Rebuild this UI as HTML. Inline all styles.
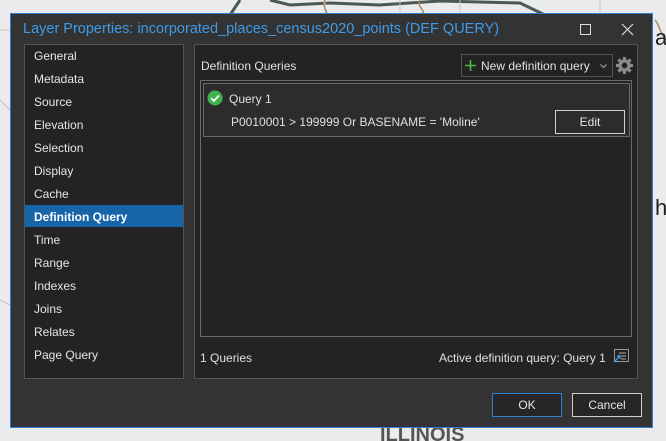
<!DOCTYPE html>
<html><head><style>
*{margin:0;padding:0;box-sizing:border-box}
body{width:666px;height:441px;overflow:hidden;background:#e9ebed;font-family:"Liberation Sans",sans-serif;position:relative}
.a{position:absolute}
.dlg{left:10px;top:13px;width:643px;height:415px;background:#333333;border:1px solid #2f7fd0}
.t{color:#3f9be8;font-size:14.5px;left:23px;top:21px;white-space:nowrap}
.lp{left:24px;top:44px;width:160px;height:335px;background:#232323;border:1px solid #555}
.it{left:34px;color:#e6e6e6;font-size:12px}
.rp{left:194px;top:44px;width:444px;height:335px;background:#232323;border:1px solid #555}
.txt{color:#e0e0e0;font-size:12px;white-space:nowrap}
.btn{border:1px solid #8a8a8a;color:#e6e6e6;font-size:12px;text-align:center}
</style></head><body>
<svg class="a" style="left:0;top:0" width="666" height="441">
<path d="M240 0 L230 15 M270 0 L290 5 L330 3 L380 5 L440 1 L520 3 L545 15" stroke="#4a5a50" stroke-width="3" fill="none"/>
<path d="M325 0 V13 M400 0 V13 M460 0 V13 M600 0 V13 M0 30 H10" stroke="#c8c8c8" fill="none"/>
<path d="M325 0 C322 5 326 10 327 13 M420 0 C416 6 425 10 423 13 M655 20 C660 25 658 30 666 40" stroke="#b08a60" stroke-width="1.5" fill="none"/>
<path d="M0 100 L10 110 M0 300 L10 305" stroke="#c0c0c0" fill="none"/>
<text x="655" y="45" font-size="22" font-family="Liberation Sans" fill="#222">a</text>
<text x="655" y="215" font-size="22" font-family="Liberation Sans" fill="#222">h</text>
<text x="380" y="441" font-size="20" font-family="Liberation Sans" font-weight="bold" fill="#555">ILLINOIS</text>
</svg>
<div class="a dlg"></div>
<div class="a t">Layer Properties: incorporated_places_census2020_points (DEF QUERY)</div>
<div class="a" style="left:580px;top:24px;width:11px;height:11px;border:1px solid #ddd"></div>
<svg class="a" style="left:621px;top:23px" width="13" height="13"><path d="M1 1L12 12M12 1L1 12" stroke="#ddd" stroke-width="1.2"/></svg>
<div class="a lp"></div>
<div class="a" style="left:25px;top:205px;width:158px;height:22px;background:#1565a8"></div>
<div class="a it" style="top:49px">General</div>
<div class="a it" style="top:72px">Metadata</div>
<div class="a it" style="top:95px">Source</div>
<div class="a it" style="top:118px">Elevation</div>
<div class="a it" style="top:141px">Selection</div>
<div class="a it" style="top:164px">Display</div>
<div class="a it" style="top:187px">Cache</div>
<div class="a it" style="top:210px;font-weight:bold;color:#fff">Definition Query</div>
<div class="a it" style="top:233px">Time</div>
<div class="a it" style="top:256px">Range</div>
<div class="a it" style="top:279px">Indexes</div>
<div class="a it" style="top:302px">Joins</div>
<div class="a it" style="top:325px">Relates</div>
<div class="a it" style="top:348px">Page Query</div>
<div class="a rp"></div>
<div class="a txt" style="left:201px;top:59px">Definition Queries</div>
<div class="a" style="left:461px;top:54px;width:152px;height:23px;border:1px solid #555"></div>
<svg class="a" style="left:465px;top:60px" width="11" height="11"><path d="M5.5 0V11M0 5.5H11" stroke="#4cbb4c" stroke-width="1.6"/></svg>
<div class="a txt" style="left:481px;top:59px">New definition query</div>
<svg class="a" style="left:600px;top:64px" width="7" height="5"><path d="M0.5 0.5L3.5 3.5L6.5 0.5" stroke="#aaa" fill="none"/></svg>
<svg class="a" style="left:615px;top:56px" width="19" height="19" viewBox="0 0 20 20"><g fill="#8a8a8a"><circle cx="10" cy="10" r="6.5"/><rect x="8.3" y="1" width="3.4" height="18"/><rect x="1" y="8.3" width="18" height="3.4"/><rect x="8.3" y="1" width="3.4" height="18" transform="rotate(45 10 10)"/><rect x="8.3" y="1" width="3.4" height="18" transform="rotate(-45 10 10)"/></g><circle cx="10" cy="10" r="3" fill="#232323"/></svg>
<div class="a" style="left:200px;top:80px;width:432px;height:257px;border:1px solid #6a6a6a"></div>
<div class="a" style="left:203px;top:83px;width:427px;height:54px;background:#2c2c2c;border:1px solid #6a6a6a"></div>
<svg class="a" style="left:207px;top:90px" width="16" height="16"><circle cx="8" cy="8" r="7.5" fill="#3fb24f"/><path d="M4.2 8.3 L7 11 L11.8 5.5" stroke="#fff" stroke-width="1.8" fill="none"/></svg>
<div class="a txt" style="left:229px;top:92px">Query 1</div>
<div class="a txt" style="left:231px;top:115px">P0010001 &gt; 199999 Or BASENAME = 'Moline'</div>
<div class="a btn" style="left:555px;top:110px;width:70px;height:24px;line-height:22px;border-color:#cfcfcf">Edit</div>
<div class="a txt" style="left:200px;top:351px">1 Queries</div>
<div class="a txt" style="left:439px;top:351px">Active definition query: Query 1</div>
<svg class="a" style="left:613px;top:349px" width="16" height="14"><rect x="1.5" y="0.5" width="14" height="12" fill="none" stroke="#999"/><path d="M6 4H13M8 7H13M8 10H13" stroke="#aaa"/><path d="M1 13 L7 7 M4 7H7V10" stroke="#3c9be0" stroke-width="1.4" fill="none"/></svg>
<div class="a btn" style="left:492px;top:393px;width:70px;height:24px;line-height:22px;border-color:#2f7fd0;background:#262626">OK</div>
<div class="a btn" style="left:572px;top:393px;width:70px;height:24px;line-height:22px;border-color:#cfcfcf;background:#262626">Cancel</div>
</body></html>
